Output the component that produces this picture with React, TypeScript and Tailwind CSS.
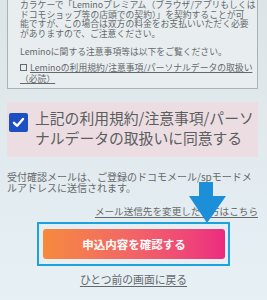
export default function App() {
  return (
    <div
      className="relative w-[267px] h-[300px] overflow-hidden bg-gradient-to-b from-[#dce4e7] to-[#e7f0f5] text-[#66696b]"
      style={{ fontFamily: '"Noto Sans CJK JP", "Noto Sans", sans-serif' }}
    >
      {/* notice box, scrolled so its top is cut off */}
      <div className="ml-[7px] w-[251px] h-[96px] -mt-[7px] overflow-hidden border border-[#a9b2b6] bg-[#e8eef0] pl-[12px] pt-[6px]">
        <div className="text-[8.8px] leading-[9.6px] whitespace-nowrap">
          <div>カラケーで「Leminoプレミアム（ブラウザ/アプリもしくは</div>
          <div>ドコモショップ等の店頭での契約）」を契約することが可</div>
          <div>能ですが、この場合は双方の料金をお支払いいただく必要</div>
          <div>がありますので、ご注意ください。</div>
        </div>
        <div className="mt-[9px] h-[10px] text-[8.8px] leading-[10px] whitespace-nowrap">
          Leminoに関する注意事項等は以下をご覧ください。
        </div>
        <div className="mt-[5px] text-[8.8px] leading-[11px] whitespace-nowrap">
          <div className="flex items-center h-[11px]">
            <span className="inline-block w-[7px] h-[7px] border border-[#66696b] mr-[3px]"></span>
            <span className="underline underline-offset-1">Leminoの利用規約/注意事項/パーソナルデータの取扱い</span>
          </div>
          <div className="h-[11px]">
            <span className="underline underline-offset-1">（必読）</span>
          </div>
        </div>
      </div>

      {/* agreement checkbox */}
      <div className="ml-[7px] w-[251px] h-[55px] mt-[13px] bg-[#ebdde2] pl-[2px] pt-[6px] flex items-start gap-[7px]">
        <div className="mt-[5px] w-[19px] h-[19px] shrink-0 rounded-[2px] bg-[#1c4fc2] flex items-center justify-center">
          <svg width="13" height="13" viewBox="0 0 13 13">
            <path d="M2 6.8 L5.2 9.8 L11 3" fill="none" stroke="white" strokeWidth="2.4" strokeLinecap="round" strokeLinejoin="round" />
          </svg>
        </div>
        <div className="text-[14.8px] leading-[20px] text-[#5b5d5f] whitespace-nowrap">
          <div>上記の利用規約/注意事項/パーソ</div>
          <div>ナルデータの取扱いに同意する</div>
        </div>
      </div>

      <div className="ml-[7px] mt-[14px] text-[10px] leading-[11px] whitespace-nowrap">
        <div>受付確認メールは、ご登録のドコモメール/spモードメ</div>
        <div>ルアドレスに送信されます。</div>
      </div>

      <div className="mt-[11px] h-[14px] pr-[9px] flex justify-end">
        <span className="text-[9.6px] leading-[14px] underline underline-offset-2">メール送信先を変更したい方はこちら</span>
      </div>

      <div className="mx-auto mt-[4px] w-[193px] h-[44px] border-2 border-[#1ea2de] pl-[4px] pr-[3px] py-[5px]">
        <div className="h-[30px] rounded-[3px] bg-gradient-to-r from-[#f68a3b] to-[#ec2a80] flex items-center justify-center">
          <span className="text-white font-bold text-[11.5px] leading-[14px]">申込内容を確認する</span>
        </div>
      </div>

      <div className="mt-[6px] h-[14px] flex justify-center">
        <span className="text-[10.8px] leading-[14px] underline underline-offset-2">ひとつ前の画面に戻る</span>
      </div>

      {/* blue pointer arrow */}
      <svg className="absolute left-[189px] top-[182px]" width="37" height="42" viewBox="0 0 37 42">
        <polygon points="10,0 24,0 24,14 37,14 18,41 0,14 10,14" fill="#1d8fd9" />
      </svg>
    </div>
  );
}
